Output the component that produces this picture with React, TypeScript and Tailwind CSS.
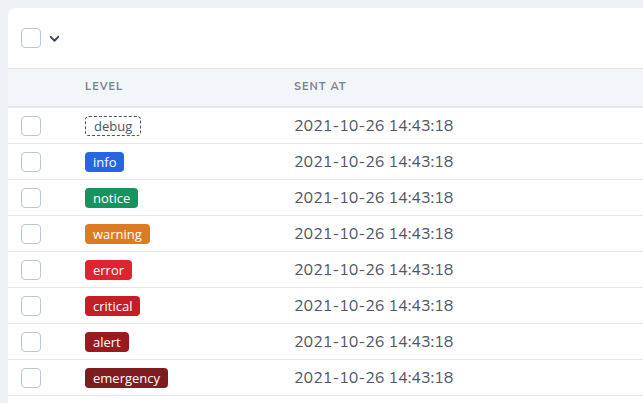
import React from 'react';

type Level = { name: string; cls: string };

const levels: Level[] = [
  { name: 'debug', cls: 'border border-dashed border-gray-600 text-gray-600 bg-white' },
  { name: 'info', cls: 'bg-[#2766e3] text-white' },
  { name: 'notice', cls: 'bg-[#17935f] text-white' },
  { name: 'warning', cls: 'bg-[#dd7b22] text-white' },
  { name: 'error', cls: 'bg-[#df2430] text-white' },
  { name: 'critical', cls: 'bg-[#c41f27] text-white' },
  { name: 'alert', cls: 'bg-[#991b1f] text-white' },
  { name: 'emergency', cls: 'bg-[#7e1c1f] text-white' },
];

function Checkbox() {
  return <div className="w-5 h-5 rounded-[4px] border border-[#b8c7d5] bg-white shrink-0" />;
}

export default function App() {
  return (
    <div className="h-[403px] bg-[#eef1f5] pl-2 pt-2 overflow-hidden flex flex-col" style={{ fontFamily: '"Nunito Sans", Lato, "Noto Sans", sans-serif' }}>
      <div className="bg-white rounded-tl-lg w-[700px] flex-1">
        <div className="h-[60px] flex items-center pl-[13px] gap-[7px]">
          <Checkbox />
          <svg width="13" height="13" viewBox="0 0 24 24" fill="none" stroke="#3f4a5a" strokeWidth="3.8" strokeLinecap="round" strokeLinejoin="round">
            <path d="M5 9l7 7 7-7" />
          </svg>
        </div>
        <div className="h-10 flex items-center bg-[#f3f6f9] border-t border-[#e3e8ee] border-b-2 border-b-[#e1e6ec] text-[11px] font-bold tracking-[0.09em] text-[#7a8290]">
          <div className="w-[77px]" />
          <div className="w-[209px]">LEVEL</div>
          <div>SENT AT</div>
        </div>
        {levels.map((l) => (
          <div key={l.name} className="h-9 flex items-center border-b border-[#e3e6ea]">
            <div className="w-[77px] pl-[13px]">
              <Checkbox />
            </div>
            <div className="w-[209px]">
              <span className={`inline-flex items-center h-5 px-2 rounded-[4px] text-[13px] leading-none ${l.cls}`} style={{ fontFamily: '"Open Sans", "Noto Sans", sans-serif' }}>
                {l.name}
              </span>
            </div>
            <div className="text-[16px] text-[#505866]">2021-10-26 14:43:18</div>
          </div>
        ))}
      </div>
    </div>
  );
}
